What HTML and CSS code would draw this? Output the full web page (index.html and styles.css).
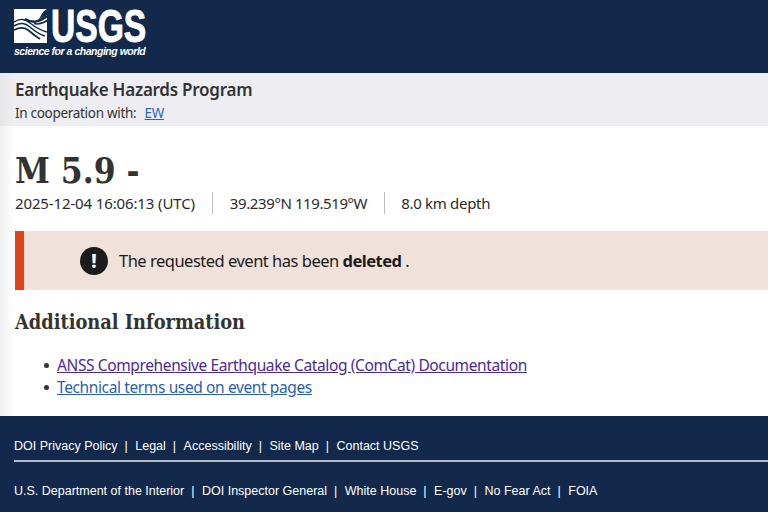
FILE: index.html
```html
<!DOCTYPE html>
<html lang="en">
<head>
<meta charset="utf-8">
<title>M 5.9 - USGS</title>
<link rel="stylesheet" href="styles.css">
</head>
<body>
<header class="site-header">
  <a class="logo" href="#">
    <span class="logo-top">
      <svg class="logo-mark" viewBox="0 0 33 34" width="33" height="34" aria-hidden="true">
        <rect width="33" height="34" fill="#fff"/>
        <g fill="none" stroke="#12294b">
          <path d="M0 13C7 9 11 10 16 14S25 21 33 23" stroke-width="1.3"/>
          <path d="M0 17C7 13 11 14 16 18S24 25 31 27" stroke-width="1.6"/>
          <path d="M0 21C6 18 10 18 14 21S21 27 26 30" stroke-width="1.8"/>
          <path d="M11 10C18 14 24 14 33 7" stroke-width="2.4"/>
          <path d="M20 14.500C25 16 29 14 33 11.500" stroke-width="1.600"/>
        </g>
        <path d="M33 0 33 6 24 11C28 7 27 3 33 0Z" fill="#12294b"/>
      </svg>
      <span class="logo-word">USGS</span>
    </span>
    <span class="logo-tag">science for a changing world</span>
  </a>
</header>
<section class="program">
  <h2 class="program-title">Earthquake Hazards Program</h2>
  <p class="program-sub">In cooperation with: <a class="program-link" href="#">EW</a></p>
</section>
<main class="content">
  <h1 class="event-title">M 5.9 -</h1>
  <ul class="event-meta">
    <li class="meta-item meta-time">2025-12-04 16:06:13 (UTC)</li>
    <li class="meta-item meta-place">39.239°N 119.519°W</li>
    <li class="meta-item meta-depth">8.0 km depth</li>
  </ul>
  <div class="alert">
    <span class="alert-icon">!</span>
    <span class="alert-text">The requested event has been <b>deleted</b> .</span>
  </div>
  <h2 class="section-title">Additional Information</h2>
  <ul class="info-list">
    <li class="info-item"><a class="link-visited" href="#">ANSS Comprehensive Earthquake Catalog (ComCat) Documentation</a></li>
    <li class="info-item"><a class="link-new" href="#">Technical terms used on event pages</a></li>
  </ul>
</main>
<footer class="site-footer">
  <nav class="foot-row foot-top">
    <a href="#">DOI Privacy Policy</a><a href="#">Legal</a><a href="#">Accessibility</a><a href="#">Site Map</a><a href="#">Contact USGS</a>
  </nav>
  <nav class="foot-row foot-bottom">
    <a href="#">U.S. Department of the Interior</a><a href="#">DOI Inspector General</a><a href="#">White House</a><a href="#">E-gov</a><a href="#">No Fear Act</a><a href="#">FOIA</a>
  </nav>
</footer>
</body>
</html>
```
FILE: styles.css
```css
* { box-sizing: border-box; }
html, body { margin: 0; padding: 0; }
body {
  width: 768px;
  height: 512px;
  overflow: hidden;
  background: #fff;
  color: #2b2b2b;
  font-family: "Noto Sans", sans-serif;
  display: flex;
  flex-direction: column;
}
a { color: inherit; }
.site-header {
  height: 73px;
  background: #12294b;
  padding: 9px 14px 0;
  flex: none;
}
.logo { display: inline-flex; flex-direction: column; color: #fff; text-decoration: none; width: 134px; }
.logo-top { display: flex; align-items: flex-start; height: 35px; }
.logo-mark { display: block; flex: none; }
.logo-word {
  font-family: "Liberation Sans", sans-serif;
  font-weight: 700;
  font-size: 46px;
  line-height: 35px;
  display: inline-block;
  transform: scaleX(.73);
  transform-origin: left center;
  -webkit-text-stroke: 1px #fff;
  margin-left: 4px;
}
.logo-tag {
  font-family: "Liberation Sans", sans-serif;
  font-weight: 700;
  font-style: italic;
  font-size: 10.5px;
  line-height: 14px;
  letter-spacing: -.48px;
  white-space: nowrap;
}
.program {
  height: 53px;
  background: linear-gradient(90deg, #e6e6e8, #eeeef2 14px);
  padding: 6px 15px 0;
  flex: none;
}
.program-title { margin: 0; font-size: 17px; line-height: 22px; font-weight: 600; color: #333; letter-spacing: -.25px; }
.program-sub { margin: 2px 0 0; font-size: 13.5px; line-height: 20px; letter-spacing: -.3px; color: #333; }
.program-link { color: #2a68b5; margin-left: 5px; }
.content {
  flex: 1;
  padding: 0 15px;
  background: linear-gradient(90deg, #f0f0f0, #fff 14px);
}
.event-title {
  margin: 25px 0 0;
  font-family: "DejaVu Serif Condensed", "DejaVu Serif", serif;
  font-weight: 700;
  font-size: 35px;
  line-height: 40px;
  color: #333;
}
.event-meta {
  list-style: none;
  display: flex;
  margin: 1px 0 0;
  padding: 0;
  font-size: 15px;
  line-height: 22px;
  color: #2b2b2b;
}
.meta-item { padding: 0 17px; border-left: 1px solid #bdbdbd; }
.meta-time { padding-left: 0; border-left: 0; letter-spacing: -.13px; }
.meta-place { letter-spacing: -.4px; }
.meta-depth { letter-spacing: -.3px; padding-left: 16px; }
.alert {
  height: 59px;
  margin: 17px -15px 0 0;
  background: #f0e1db;
  border-left: 9px solid #dd4316;
  display: flex;
  align-items: center;
  padding-left: 56px;
  gap: 11px;
}
.alert-icon {
  width: 28px;
  height: 28px;
  border-radius: 50%;
  background: #1b1b1b;
  color: #fff;
  font-weight: 800;
  font-size: 19px;
  line-height: 28px;
  text-align: center;
  flex: none;
}
.alert-text { font-size: 16.5px; letter-spacing: -.5px; color: #1b1b1b; }
.section-title {
  margin: 17px 0 0;
  font-family: "DejaVu Serif Condensed", "DejaVu Serif", serif;
  font-weight: 700;
  font-size: 19.8px;
  line-height: 30px;
  color: #333;
}
.info-list {
  list-style: none;
  margin: 17px 0 0;
  padding: 0 0 0 29px;
  font-size: 15.5px;
  line-height: 22px;
  letter-spacing: -.38px;
}
.info-item { display: flex; align-items: center; gap: 8px; }
.info-item::before {
  content: "";
  width: 5px;
  height: 5px;
  border-radius: 50%;
  background: #333;
  flex: none;
}
.link-visited { color: #4a2a9c; }
.link-new { color: #2a5fb0; }
.site-footer {
  height: 96px;
  background: #12294b;
  color: #fff;
  font-family: "Liberation Sans", sans-serif;
  font-size: 12.5px;
  line-height: 16px;
  padding-left: 14px;
  flex: none;
}
.foot-row { display: flex; }
.foot-row a { text-decoration: none; }
.foot-row a + a { margin-left: 9px; padding-left: 8.750px; position: relative; }
.foot-row a + a::before { content: "|"; position: absolute; left: -2px; }
.foot-top { padding: 22px 0 6px; border-bottom: 2px solid #b5bac4; }
.foot-bottom { padding-top: 21px; }
```
